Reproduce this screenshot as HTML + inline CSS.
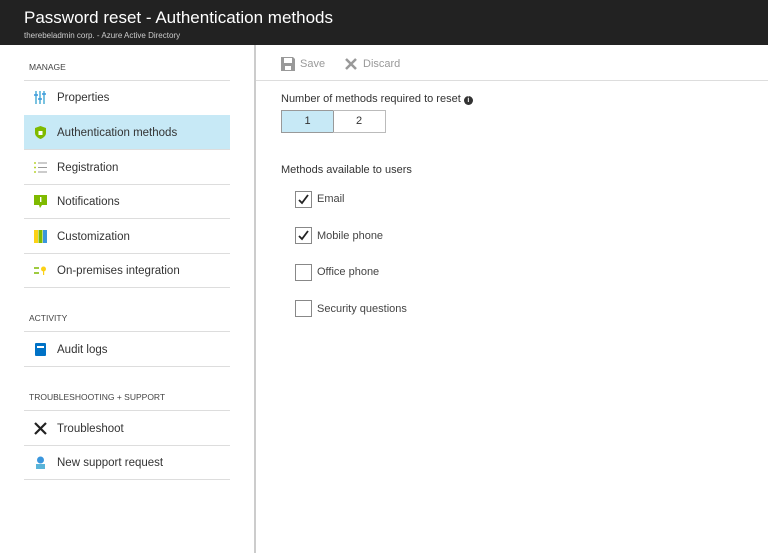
<!DOCTYPE html><html><head><style>
body{margin:0;width:768px;height:553px;background:#fff;font-family:"Liberation Sans",sans-serif;position:relative;overflow:hidden;color:#333}
.a{position:absolute}
.hd{left:0;top:0;width:768px;height:45px;background:#222}
.t{left:24px;top:8px;font-size:17px;color:#fff}
.st{left:24px;top:31px;font-size:8px;color:#ccc}
.sec{left:29px;font-size:8.5px;color:#444}
.ln{left:24px;width:206px;height:1px;background:#ddd}
.it{left:57px;font-size:11.5px;color:#333}
.ic{left:34px;width:13px;height:13px}
.vb{left:254px;top:45px;width:2px;height:508px;background:#ccc}
.cb{width:15px;height:15px;border:1px solid #888;background:#fff}
.lb{left:317px;font-size:11px;color:#444}
</style></head><body>
<div class="a hd"></div>
<div class="a t">Password reset - Authentication methods</div>
<div class="a st">therebeladmin corp. - Azure Active Directory</div>
<div class="a vb"></div>
<div class="a sec" style="top:62px">MANAGE</div>
<div class="a ln" style="top:80px"></div>
<div class="a" style="left:24px;top:115px;width:206px;height:34px;background:#c7e9f6"></div>
<div class="a ln" style="top:149px"></div><div class="a ln" style="top:184px"></div><div class="a ln" style="top:218px"></div><div class="a ln" style="top:253px"></div><div class="a ln" style="top:287px"></div>
<svg class="a ic" style="top:91px" viewBox="0 0 13 13"><path d="M2 0v13M6 0v13M10 0v13" stroke="#59b4d9" stroke-width="1.6"/><path d="M0 4h4M4 8h4M8 3h4" stroke="#3a96dd" stroke-width="1.6"/></svg>
<div class="a it" style="top:92px">Properties</div>
<svg class="a ic" style="top:126px" viewBox="0 0 13 13"><path d="M6.5 0L12 2v5c0 3-3 5-5.5 6C4 12 1 10 1 7V2z" fill="#7fba00"/><rect x="4.5" y="5" width="4" height="4" fill="#fff"/></svg>
<div class="a it" style="top:127px">Authentication methods</div>
<svg class="a ic" style="top:161px" viewBox="0 0 13 13"><path d="M4 2h9M4 6.5h9M4 11h9" stroke="#999"/><path d="M0 2h2M0 6.5h2M0 11h2" stroke="#b8d432" stroke-width="1.5"/></svg>
<div class="a it" style="top:162px">Registration</div>
<svg class="a ic" style="top:195px" viewBox="0 0 13 13"><path d="M0 0h13v10H8l-2 3-1-3H0z" fill="#7fba00"/><rect x="6" y="2" width="1.4" height="5" fill="#fff"/></svg>
<div class="a it" style="top:196px">Notifications</div>
<svg class="a ic" style="top:230px" viewBox="0 0 13 13"><rect width="4" height="13" fill="#fcd116"/><rect x="4.5" width="4" height="13" fill="#7fba00"/><rect x="9" width="4" height="13" fill="#3a96dd"/></svg>
<div class="a it" style="top:231px">Customization</div>
<svg class="a ic" style="top:264px" viewBox="0 0 13 13"><path d="M0 4h5M0 9h5" stroke="#7fba00" stroke-width="1.6"/><circle cx="9.5" cy="5" r="2.5" fill="#fcd116"/><rect x="9" y="6" width="1.2" height="5" fill="#fcd116"/></svg>
<div class="a it" style="top:265px">On-premises integration</div>
<div class="a sec" style="top:313px">ACTIVITY</div>
<div class="a ln" style="top:331px"></div><div class="a ln" style="top:366px"></div>
<svg class="a ic" style="top:343px" viewBox="0 0 13 13"><rect x="1" width="11" height="13" rx="1" fill="#0072c6"/><rect x="3" y="3" width="7" height="2" fill="#fff"/></svg>
<div class="a it" style="top:344px">Audit logs</div>
<div class="a sec" style="top:392px">TROUBLESHOOTING + SUPPORT</div>
<div class="a ln" style="top:410px"></div><div class="a ln" style="top:445px"></div><div class="a ln" style="top:479px"></div>
<svg class="a ic" style="top:422px" viewBox="0 0 13 13"><path d="M1 12L12 1M1 1l11 11" stroke="#222" stroke-width="2.2"/></svg>
<div class="a it" style="top:423px">Troubleshoot</div>
<svg class="a ic" style="top:456px" viewBox="0 0 13 13"><circle cx="6.5" cy="4" r="3.5" fill="#3a96dd"/><rect x="2" y="8" width="9" height="5" fill="#59b4d9"/></svg>
<div class="a it" style="top:457px">New support request</div>
<div class="a" style="left:256px;top:80px;width:512px;height:1px;background:#ddd"></div>
<svg class="a" style="left:281px;top:57px" width="14" height="14" viewBox="0 0 14 14"><path d="M0 0h12l2 2v12H0z" fill="#999"/><rect x="3" y="1" width="8" height="5" fill="#fff"/><rect x="4" y="9" width="6" height="4" fill="#fff"/></svg>
<div class="a" style="left:300px;top:58px;font-size:11px;color:#999">Save</div>
<svg class="a" style="left:345px;top:58px" width="12" height="12"><path d="M1 1l10 10M11 1L1 11" stroke="#999" stroke-width="2.5"/></svg>
<div class="a" style="left:363px;top:58px;font-size:11px;color:#999">Discard</div>
<div class="a" style="left:281px;top:93px;font-size:11px;color:#333">Number of methods required to reset <span style="display:inline-block;width:9px;height:9px;border-radius:50%;background:#333;color:#fff;font-size:7px;text-align:center;line-height:9px;font-weight:bold;vertical-align:0">i</span></div>
<div class="a" style="left:281px;top:110px;width:51px;height:21px;background:#c7e9f6;border:1px solid #999;font-size:11px;text-align:center;line-height:21px">1</div>
<div class="a" style="left:333px;top:110px;width:52px;height:21px;border:1px solid #bbb;border-left:none;font-size:11px;text-align:center;line-height:21px">2</div>
<div class="a" style="left:281px;top:164px;font-size:11px;color:#333">Methods available to users</div>
<div class="a cb" style="left:295px;top:191px"></div><svg class="a" style="left:296px;top:192px" width="15" height="15"><path d="M3 8l3 3 6-8" stroke="#222" stroke-width="1.8" fill="none"/></svg>
<div class="a lb" style="top:193px">Email</div>
<div class="a cb" style="left:295px;top:227px"></div><svg class="a" style="left:296px;top:228px" width="15" height="15"><path d="M3 8l3 3 6-8" stroke="#222" stroke-width="1.8" fill="none"/></svg>
<div class="a lb" style="top:230px">Mobile phone</div>
<div class="a cb" style="left:295px;top:264px"></div>
<div class="a lb" style="top:266px">Office phone</div>
<div class="a cb" style="left:295px;top:300px"></div>
<div class="a lb" style="top:303px">Security questions</div>
</body></html>
